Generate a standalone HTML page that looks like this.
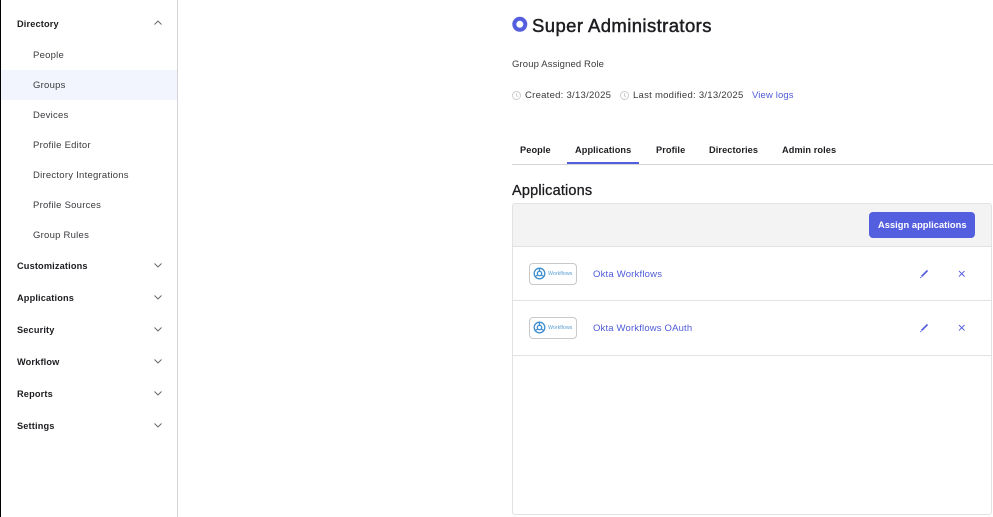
<!DOCTYPE html>
<html><head><meta charset="utf-8">
<style>
html,body{margin:0;padding:0;width:993px;height:517px;overflow:hidden;background:#fff}
body{position:relative;font-family:"Liberation Sans",sans-serif;color:#272727}
.t{position:absolute;white-space:nowrap;line-height:14px;font-size:9.5px}
.h{font-weight:700;color:#1d1d21;left:17px;font-size:9.2px;letter-spacing:.16px}
.s{left:33px;color:#3a3a3f;letter-spacing:.25px}
.b{position:absolute}
.l{color:#4f5bd8}
svg{position:absolute;overflow:visible}
.tab{font-weight:700;color:#1d1d21;font-size:9.2px;letter-spacing:.1px}
</style></head><body>
<div class="b" style="left:0;top:0;width:1px;height:517px;background:#000"></div>
<div class="b" style="left:177px;top:0;width:1px;height:517px;background:#d4d4d6"></div>
<div class="b" style="left:1px;top:70px;width:176px;height:30px;background:#f2f5fd"></div>

<div class="t h" style="top:17px">Directory</div>
<div class="t s" style="top:49px">People</div>
<div class="t s" style="top:79px">Groups</div>
<div class="t s" style="top:109px">Devices</div>
<div class="t s" style="top:139px">Profile Editor</div>
<div class="t s" style="top:169px">Directory Integrations</div>
<div class="t s" style="top:199px">Profile Sources</div>
<div class="t s" style="top:229px">Group Rules</div>
<div class="t h" style="top:259px">Customizations</div>
<div class="t h" style="top:291px">Applications</div>
<div class="t h" style="top:323px">Security</div>
<div class="t h" style="top:355px">Workflow</div>
<div class="t h" style="top:387px">Reports</div>
<div class="t h" style="top:419px">Settings</div>

<svg style="left:0;top:0" width="178" height="517" fill="none" stroke="#5f5f64" stroke-width=".9">
<path d="M154.500 24.500L158 21l3.500 3.500"/>
<path d="M154.500 263.500L158 267l3.500-3.500"/>
<path d="M154.500 295.500L158 299l3.500-3.500"/>
<path d="M154.500 327.500L158 331l3.500-3.500"/>
<path d="M154.500 359.500L158 363l3.500-3.500"/>
<path d="M154.500 391.500L158 395l3.500-3.500"/>
<path d="M154.500 423.500L158 427l3.500-3.500"/>
</svg>

<svg style="left:512px;top:16px" width="16" height="16"><circle cx="7.800" cy="8.300" r="5.500" fill="none" stroke="#545fe0" stroke-width="4"/></svg>
<div class="t" style="left:532px;top:15px;line-height:22px;font-size:18.500px;color:#1d1d21;-webkit-text-stroke:.45px #1d1d21;letter-spacing:.41px">Super Administrators</div>
<div class="t" style="left:512px;top:58px;color:#3a3a3f;letter-spacing:.12px">Group Assigned Role</div>

<svg style="left:512px;top:91px" width="9" height="9" fill="none" stroke="#c9c9cc" stroke-width=".9"><circle cx="4.500" cy="4.500" r="4"/><path d="M4.500 2.200v2.500l1.500 1"/></svg>
<div class="t" style="left:525px;top:89px;color:#3a3a3f;letter-spacing:.27px">Created: 3/13/2025</div>
<svg style="left:620px;top:91px" width="9" height="9" fill="none" stroke="#c9c9cc" stroke-width=".9"><circle cx="4.500" cy="4.500" r="4"/><path d="M4.500 2.200v2.500l1.500 1"/></svg>
<div class="t" style="left:633px;top:89px;color:#3a3a3f;letter-spacing:.27px">Last modified: 3/13/2025</div>
<div class="t l" style="left:752px;top:89px;letter-spacing:.13px">View logs</div>

<div class="t tab" style="left:520px;top:143px">People</div>
<div class="t tab" style="left:575px;top:143px">Applications</div>
<div class="t tab" style="left:656px;top:143px">Profile</div>
<div class="t tab" style="left:709px;top:143px">Directories</div>
<div class="t tab" style="left:782px;top:143px">Admin roles</div>
<div class="b" style="left:512px;top:164px;width:481px;height:1px;background:#d4d4d6"></div>
<div class="b" style="left:567px;top:162px;width:72px;height:2px;background:#545fe0"></div>

<div class="t" style="left:512px;top:183px;line-height:16px;font-size:14.500px;color:#1d1d21;-webkit-text-stroke:.3px #1d1d21;letter-spacing:.18px">Applications</div>

<div class="b" style="left:512px;top:203px;width:478px;height:310px;border:1px solid #e2e2e4;border-radius:3px;background:#fff"></div>
<div class="b" style="left:513px;top:204px;width:478px;height:42px;background:#f3f3f3;border-radius:2px 2px 0 0"></div>
<div class="b" style="left:513px;top:246px;width:478px;height:1px;background:#e2e2e4"></div>
<div class="b" style="left:513px;top:300px;width:478px;height:1px;background:#e2e2e4"></div>
<div class="b" style="left:513px;top:355px;width:478px;height:1px;background:#e2e2e4"></div>

<div class="b" style="left:869px;top:212px;width:106px;height:26px;background:#545fe0;border-radius:4px"></div>
<div class="t" style="left:878px;top:218px;font-weight:700;font-size:9.300px;color:#fff;letter-spacing:.04px">Assign applications</div>

<div class="b" style="left:529px;top:263px;width:46px;height:20px;border:1px solid #c9c9cc;border-radius:4px"></div>
<svg style="left:533px;top:267px" width="13" height="13" fill="none" stroke="#3f8fd0" stroke-width="1.300"><circle cx="6.500" cy="6.500" r="5.300"/><circle cx="6.500" cy="6.500" r="2.200"/><path d="M6.500 1.500v3M2.200 9.500l2.500-1.500M10.800 9.500L8.300 8"/></svg>
<div class="t" style="left:548px;top:269px;font-size:5.300px;color:#5a9fd6;line-height:10px">Workflows</div>
<div class="t l" style="left:593px;top:268px;letter-spacing:.2px">Okta Workflows</div>

<div class="b" style="left:529px;top:317px;width:46px;height:20px;border:1px solid #c9c9cc;border-radius:4px"></div>
<svg style="left:533px;top:321px" width="13" height="13" fill="none" stroke="#3f8fd0" stroke-width="1.300"><circle cx="6.500" cy="6.500" r="5.300"/><circle cx="6.500" cy="6.500" r="2.200"/><path d="M6.500 1.500v3M2.200 9.500l2.500-1.500M10.800 9.500L8.300 8"/></svg>
<div class="t" style="left:548px;top:323px;font-size:5.300px;color:#5a9fd6;line-height:10px">Workflows</div>
<div class="t l" style="left:593px;top:322px;letter-spacing:.17px">Okta Workflows OAuth</div>

<svg style="left:918px;top:267px" width="50" height="14" fill="none" stroke="#545fe0">
<path d="M3.500 9.500L9.500 3.500" stroke-width="1.700"/><path d="M2.200 10.800l1-.6" stroke-width="1"/>
<path d="M41 4l5.500 5.500M46.500 4L41 9.500" stroke-width=".9"/>
</svg>
<svg style="left:918px;top:321px" width="50" height="14" fill="none" stroke="#545fe0">
<path d="M3.500 9.500L9.500 3.500" stroke-width="1.700"/><path d="M2.200 10.800l1-.6" stroke-width="1"/>
<path d="M41 4l5.500 5.500M46.500 4L41 9.500" stroke-width=".9"/>
</svg>
</body></html>
